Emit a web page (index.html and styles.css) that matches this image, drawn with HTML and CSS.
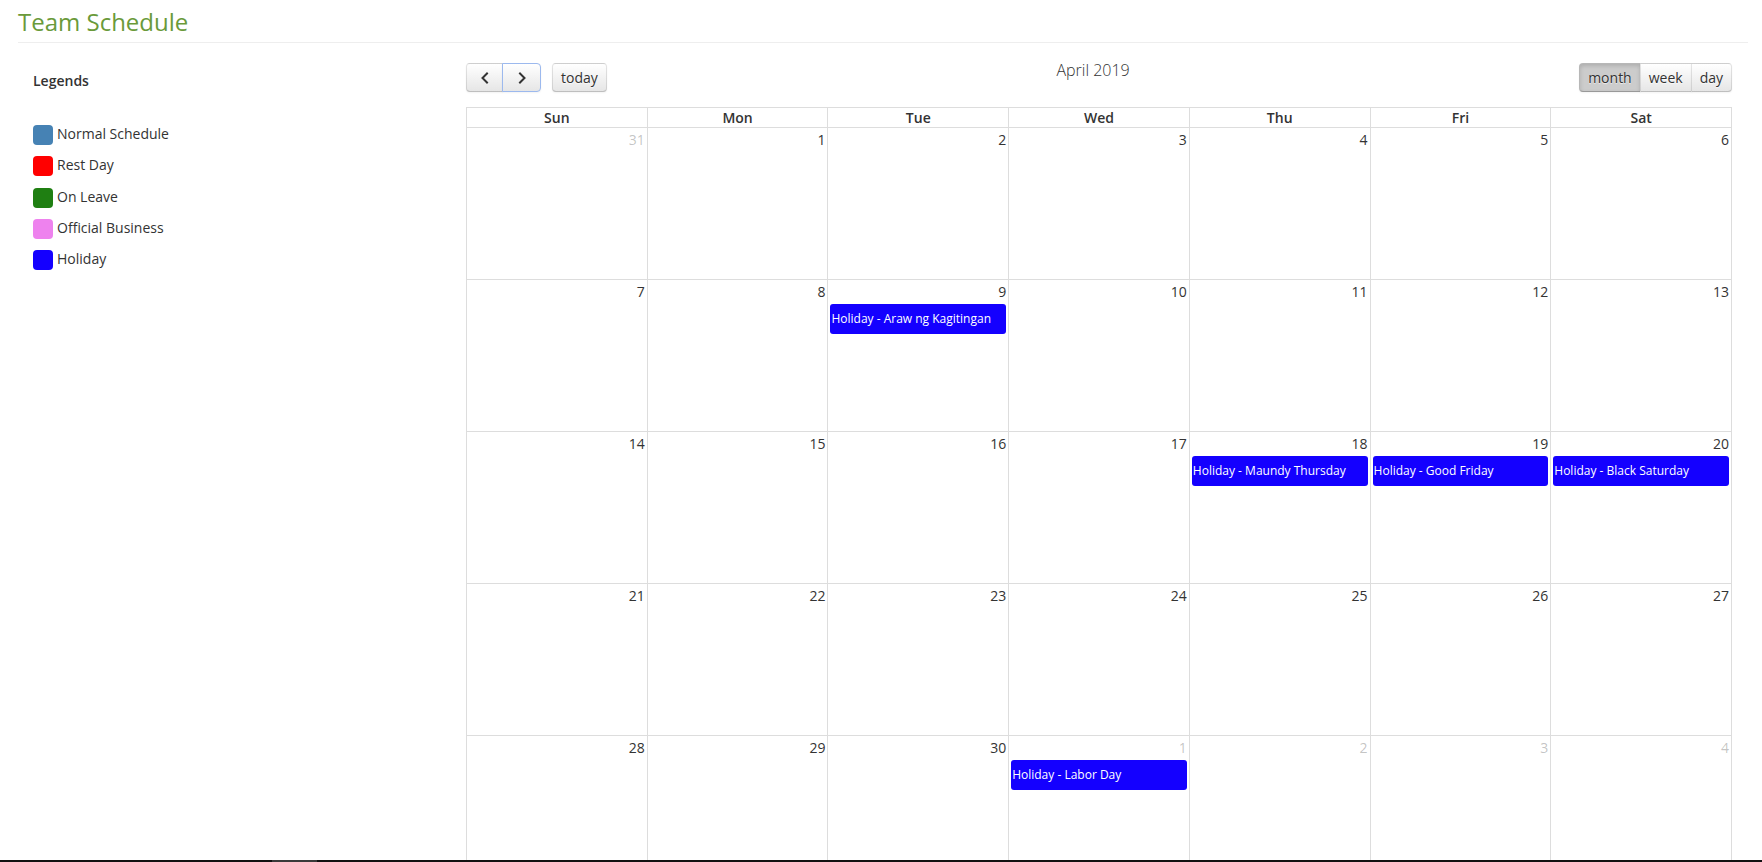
FILE: index.html
```html
<!DOCTYPE html>
<html lang="en">
<head>
<meta charset="utf-8">
<title>Team Schedule</title>
<link rel="stylesheet" href="styles.css">
</head>
<body>
<div class="page">
  <div class="page-header">
    <h1 class="page-title">Team Schedule</h1>
  </div>
  <div class="main">
    <aside class="sidebar">
      <h4 class="legend-title">Legends</h4>
      <ul class="legend-list">
        <li class="legend-item"><span class="swatch sw-normal"></span><span class="legend-label">Normal Schedule</span></li>
        <li class="legend-item"><span class="swatch sw-rest"></span><span class="legend-label">Rest Day</span></li>
        <li class="legend-item"><span class="swatch sw-leave"></span><span class="legend-label">On Leave</span></li>
        <li class="legend-item"><span class="swatch sw-ob"></span><span class="legend-label">Official Business</span></li>
        <li class="legend-item"><span class="swatch sw-holiday"></span><span class="legend-label">Holiday</span></li>
      </ul>
    </aside>
    <section class="calendar">
      <div class="toolbar">
        <div class="tb-left">
          <div class="btn-group">
            <button class="btn btn-arrow btn-prev" type="button" aria-label="prev">
              <svg width="10" height="12" viewBox="0 0 10 12"><polyline points="7,1.5 2.5,6 7,10.5" fill="none" stroke="#333" stroke-width="2" stroke-linecap="square" stroke-linejoin="miter"/></svg>
            </button>
            <button class="btn btn-arrow btn-next btn-focus" type="button" aria-label="next">
              <svg width="10" height="12" viewBox="0 0 10 12"><polyline points="3,1.5 7.5,6 3,10.5" fill="none" stroke="#333" stroke-width="2" stroke-linecap="square" stroke-linejoin="miter"/></svg>
            </button>
          </div>
          <button class="btn btn-today" type="button">today</button>
        </div>
        <div class="tb-center"><h2 class="cal-title">April 2019</h2></div>
        <div class="tb-right">
          <div class="btn-group">
            <button class="btn btn-active" type="button">month</button>
            <button class="btn" type="button">week</button>
            <button class="btn" type="button">day</button>
          </div>
        </div>
      </div>

      <div class="cal-grid">
        <div class="cal-head">
          <div class="hcell">Sun</div><div class="hcell">Mon</div><div class="hcell">Tue</div><div class="hcell">Wed</div><div class="hcell">Thu</div><div class="hcell">Fri</div><div class="hcell">Sat</div>
        </div>
        <div class="cal-body">
          <div class="day other"><div class="num">31</div></div>
          <div class="day"><div class="num">1</div></div>
          <div class="day"><div class="num">2</div></div>
          <div class="day"><div class="num">3</div></div>
          <div class="day"><div class="num">4</div></div>
          <div class="day"><div class="num">5</div></div>
          <div class="day"><div class="num">6</div></div>

          <div class="day"><div class="num">7</div></div>
          <div class="day"><div class="num">8</div></div>
          <div class="day"><div class="num">9</div><div class="event">Holiday - Araw ng Kagitingan</div></div>
          <div class="day"><div class="num">10</div></div>
          <div class="day"><div class="num">11</div></div>
          <div class="day"><div class="num">12</div></div>
          <div class="day"><div class="num">13</div></div>

          <div class="day"><div class="num">14</div></div>
          <div class="day"><div class="num">15</div></div>
          <div class="day"><div class="num">16</div></div>
          <div class="day"><div class="num">17</div></div>
          <div class="day"><div class="num">18</div><div class="event">Holiday - Maundy Thursday</div></div>
          <div class="day"><div class="num">19</div><div class="event">Holiday - Good Friday</div></div>
          <div class="day"><div class="num">20</div><div class="event">Holiday - Black Saturday</div></div>

          <div class="day"><div class="num">21</div></div>
          <div class="day"><div class="num">22</div></div>
          <div class="day"><div class="num">23</div></div>
          <div class="day"><div class="num">24</div></div>
          <div class="day"><div class="num">25</div></div>
          <div class="day"><div class="num">26</div></div>
          <div class="day"><div class="num">27</div></div>

          <div class="day"><div class="num">28</div></div>
          <div class="day"><div class="num">29</div></div>
          <div class="day"><div class="num">30</div></div>
          <div class="day other"><div class="num">1</div><div class="event">Holiday - Labor Day</div></div>
          <div class="day other"><div class="num">2</div></div>
          <div class="day other"><div class="num">3</div></div>
          <div class="day other"><div class="num">4</div></div>
        </div>
      </div>
    </section>
  </div>
</div>
<div class="taskbar"><span class="taskbar-seg"></span></div>
</body>
</html>
```
FILE: styles.css
```css
html, body {
  margin: 0;
  padding: 0;
  overflow: hidden;
  background: #fff;
}
body {
  font-family: "Open Sans", "Liberation Sans", Arial, sans-serif;
  font-size: 14px;
  color: #333;
}
.page {
  padding: 0 14px 0 18px;
}
.page-header {
  padding-top: 6px;
  padding-bottom: 4px;
  border-bottom: 1px solid #eeeeee;
}
.page-title {
  margin: 0;
  font-size: 24px;
  line-height: 32px;
  font-weight: 400;
  color: #6a9a3a;
}
.main {
  display: flex;
  align-items: flex-start;
}
.sidebar {
  width: 448px;
  flex: none;
  box-sizing: border-box;
  padding-left: 15px;
  padding-top: 28px;
}
.legend-title {
  margin: 0 0 34px 0;
  font-size: 14px;
  line-height: 20px;
  font-weight: 600;
  color: #333;
}
.legend-list {
  list-style: none;
  margin: 0;
  padding: 0;
}
.legend-item {
  display: flex;
  align-items: flex-start;
  height: 20px;
  margin-bottom: 11.25px;
}
.swatch {
  width: 20px;
  height: 20px;
  border-radius: 4px;
  margin-right: 4px;
  flex: none;
}
.legend-label {
  font-size: 14px;
  line-height: 18px;
  color: #333;
}
.sw-normal { background: #4682b4; }
.sw-rest { background: #ff0000; }
.sw-leave { background: #1f7f12; }
.sw-ob { background: #ee82ee; }
.sw-holiday { background: #1400ff; }

.calendar {
  flex: 1;
  padding-top: 20px;
  padding-right: 16px;
  min-width: 0;
}
.toolbar {
  display: flex;
  align-items: flex-start;
  margin-bottom: 15px;
}
.tb-left {
  display: flex;
  gap: 11px;
}
.tb-center {
  flex: 1;
  text-align: center;
}
.cal-title {
  margin: 0;
  font-size: 16px;
  line-height: 14px;
  font-weight: 300;
  color: #333;
}
.btn-group {
  display: flex;
}
.btn {
  position: relative;
  box-sizing: border-box;
  height: 29px;
  margin: 0;
  padding: 0 8px;
  font-family: "Open Sans", "Liberation Sans", Arial, sans-serif;
  font-size: 14px;
  color: #333;
  cursor: pointer;
  background-color: #f5f5f5;
  background-image: linear-gradient(to bottom, #ffffff, #e6e6e6);
  border: 1px solid;
  border-color: #e6e6e6 #e6e6e6 #bfbfbf;
  border-color: rgba(0,0,0,0.1) rgba(0,0,0,0.1) rgba(0,0,0,0.25);
  border-radius: 4px;
  text-shadow: 0 1px 1px rgba(255,255,255,0.75);
  box-shadow: inset 0 1px 0 rgba(255,255,255,0.2), 0 1px 2px rgba(0,0,0,0.05);
}
.btn-group .btn {
  border-radius: 0;
  margin-left: -1px;
}
.btn-group .btn:first-child {
  margin-left: 0;
  border-top-left-radius: 4px;
  border-bottom-left-radius: 4px;
}
.btn-group .btn:last-child {
  border-top-right-radius: 4px;
  border-bottom-right-radius: 4px;
}
.btn-arrow {
  display: flex;
  align-items: center;
  justify-content: center;
  padding: 0;
}
.btn-prev { width: 37px; }
.btn-next { width: 39px; }
.btn-focus {
  z-index: 2;
  border-color: #9cb9ee;
}
.btn-today {
  width: 55px;
  padding: 0;
}
.btn-active {
  background-color: #cccccc;
  background-image: none;
  box-shadow: inset 0 2px 4px rgba(0,0,0,0.15), 0 1px 2px rgba(0,0,0,0.05);
}

.cal-grid {
  border-left: 1px solid #ddd;
  border-top: 1px solid #ddd;
}
.cal-head,
.cal-body {
  display: grid;
  grid-template-columns: repeat(7, 1fr);
}
.hcell {
  height: 19px;
  line-height: 19px;
  text-align: center;
  font-weight: 600;
  font-size: 14px;
  color: #333;
  border-right: 1px solid #ddd;
  border-bottom: 1px solid #ddd;
}
.cal-body {
  grid-auto-rows: 152px;
}
.day {
  box-sizing: border-box;
  border-right: 1px solid #ddd;
  border-bottom: 1px solid #ddd;
  min-width: 0;
  overflow: hidden;
}
.num {
  padding: 2px 2px 0 2px;
  height: 20px;
  line-height: 20px;
  text-align: right;
  font-size: 14px;
  color: #333;
}
.other .num {
  color: rgba(51,51,51,0.3);
}
.event {
  margin: 2px 2px 0 2px;
  height: 30px;
  line-height: 30px;
  padding: 0 1px;
  border-radius: 3px;
  background: #1400ff;
  color: #fff;
  font-size: 12px;
  white-space: nowrap;
  overflow: hidden;
}
.taskbar {
  position: fixed;
  left: 0;
  right: 0;
  bottom: 0;
  height: 2px;
  background: #111;
}
.taskbar-seg {
  position: absolute;
  left: 272px;
  width: 45px;
  top: 0;
  height: 2px;
  background: #3a3a3a;
}
```
